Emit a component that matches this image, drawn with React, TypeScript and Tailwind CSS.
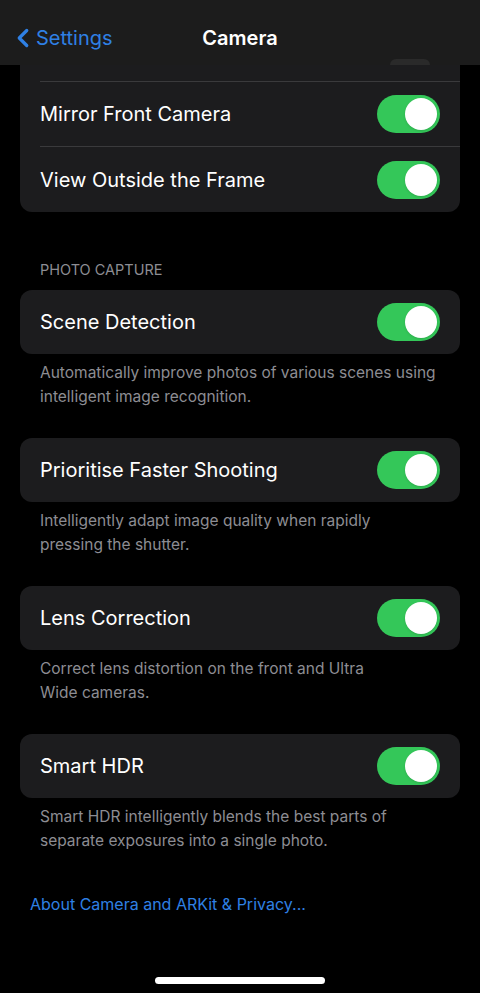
import { ChevronLeft } from 'lucide-react';

const Toggle = () => (
  <div className="w-[63px] h-[38px] rounded-full bg-[#34c759] flex items-center justify-end p-[3px]">
    <div className="w-[32px] h-[32px] rounded-full bg-white shadow" />
  </div>
);

const Row = ({ label, divider }: { label: string; divider?: boolean }) => (
  <div className="flex items-center pl-5">
    <div
      className={`flex-1 h-[65px] flex items-center justify-between pr-5 ${
        divider ? 'border-b border-[#3a3a3c]' : ''
      }`}
    >
      <span className="text-[20px] text-white">{label}</span>
      {label && <Toggle />}
    </div>
  </div>
);

const Group = ({ label, footer }: { label: string; footer: string[] }) => (
  <div className="flex flex-col">
    <div className="mx-5 rounded-xl bg-[#1c1c1e] h-[64px] flex items-center justify-between px-5">
      <span className="text-[20px] text-white">{label}</span>
      <Toggle />
    </div>
    <div className="px-10 pt-[7px] pb-[29px] text-[15.5px] leading-[24px] text-[#8d8d93]">
      {footer.map((line) => (
        <div key={line}>{line}</div>
      ))}
    </div>
  </div>
);

export default function App() {
  return (
    <div
      className="relative w-[480px] h-[993px] bg-black overflow-hidden"
      style={{ fontFamily: 'Inter, "Noto Sans", sans-serif' }}
    >
      <div className="absolute inset-x-0 top-0 h-[65px] z-10 bg-[#1c1c1c] flex items-center pt-[10px]">
        <div className="flex items-center text-[#2f80e4] pl-2">
          <ChevronLeft size={30} strokeWidth={2.6} />
          <span className="text-[20px] -ml-0.5">Settings</span>
        </div>
        <span className="absolute left-1/2 -translate-x-1/2 text-[20px] font-semibold text-white">
          Camera
        </span>
        <div className="absolute right-[50px] bottom-0 w-[40px] h-[6px] rounded-t-full bg-[#2a2a2a]" />
      </div>

      <div className="flex flex-col pt-[17px]">
        <div className="mx-5 rounded-xl bg-[#1c1c1e] flex flex-col">
          <Row label="" divider />
          <Row label="Mirror Front Camera" divider />
          <Row label="View Outside the Frame" />
        </div>

        <div className="px-10 pt-[48px] pb-[10px] text-[14.5px] text-[#8d8d93] uppercase leading-[20px]">
          Photo Capture
        </div>

        <Group
          label="Scene Detection"
          footer={['Automatically improve photos of various scenes using', 'intelligent image recognition.']}
        />
        <Group
          label="Prioritise Faster Shooting"
          footer={['Intelligently adapt image quality when rapidly', 'pressing the shutter.']}
        />
        <Group
          label="Lens Correction"
          footer={['Correct lens distortion on the front and Ultra', 'Wide cameras.']}
        />
        <Group
          label="Smart HDR"
          footer={['Smart HDR intelligently blends the best parts of', 'separate exposures into a single photo.']}
        />

        <div className="px-[30px] pt-[10px] text-[16px] text-[#2f80e4]">About Camera and ARKit &amp; Privacy...</div>
      </div>

      <div className="absolute bottom-[9px] left-1/2 -translate-x-1/2 w-[170px] h-[7px] rounded-full bg-white" />
    </div>
  );
}
